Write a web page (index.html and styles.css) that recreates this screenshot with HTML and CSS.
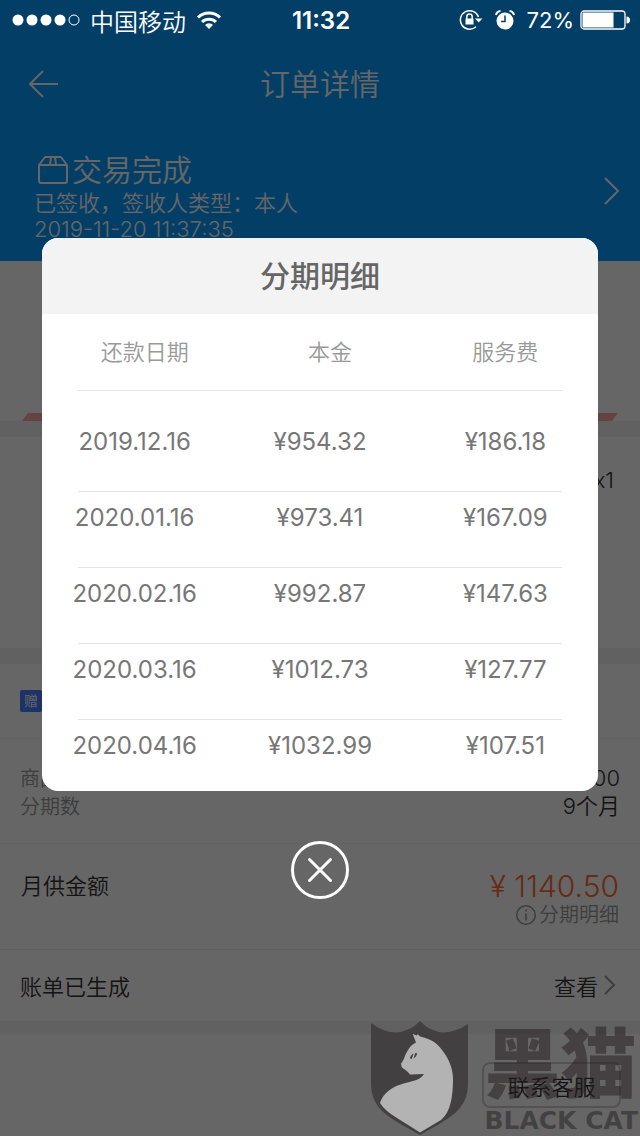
FILE: index.html
```html
<!DOCTYPE html>
<html lang="zh-cn">

<head>
  <meta charset="UTF-8">
  <meta name="viewport" content="width=device-width, initial-scale=1">
  <title>订单详情</title>
  <link rel="stylesheet" href="styles.css">
</head>

<body>
  <!-- 状态栏 -->
  <div class="status-bar">
    <div class="status-left">
      <svg width="68" height="12" viewBox="0 0 68 12" fill="#fff">
        <circle cx="6" cy="6" r="5.5"/>
        <circle cx="20" cy="6" r="5.5"/>
        <circle cx="34" cy="6" r="5.5"/>
        <circle cx="48" cy="6" r="5.5"/>
        <circle cx="62" cy="6" r="5" fill="none" stroke="#fff"/>
      </svg>
      <span class="carrier">中国移动</span>
      <svg width="26" height="20" viewBox="0 0 26 20" fill="none" stroke="#fff" stroke-width="3">
        <path d="M2 7.5a15.5 15.5 0 0 1 22 0"/>
        <path d="M6 12a10 10 0 0 1 14 0"/>
        <path d="M13 19l-4-4a5.5 5.5 0 0 1 8 0z" fill="#fff" stroke="none"/>
      </svg>
    </div>
    <span class="status-time">11:32</span>
    <div class="status-right">
      <svg width="24" height="22" viewBox="0 0 24 22" fill="none" stroke="#fff" stroke-width="1.5">
        <path d="M19.500 8A9.300 9.300 0 1 0 17 17.800"/>
        <path d="M16 9.500h7.500L19.700 13.500z" fill="#fff" stroke="none"/>
        <path d="M7.800 10V7.700a2.700 2.700 0 0 1 5.400 0V10"/>
        <rect x="6.500" y="9.500" width="8" height="6" fill="#fff" stroke="none"/>
      </svg>
      <svg width="20" height="20" viewBox="0 0 20 20">
        <circle cx="10" cy="11" r="8.500" fill="#fff"/>
        <path d="M1 5a5 5 0 0 1 4.500-4M19 5a5 5 0 0 0-4.500-4" fill="none" stroke="#fff" stroke-width="2"/>
        <path d="M10 5.500v6H6" fill="none" stroke="#033e66" stroke-width="1.5"/>
      </svg>
      <span class="battery-text">72%</span>
      <svg width="50" height="20" viewBox="0 0 50 20">
        <rect x="1" y="1" width="44" height="18" rx="3" fill="none" stroke="#fff" stroke-width="1.3"/>
        <rect x="2.500" y="2.500" width="31" height="15" fill="#fff"/>
        <path d="M46.500 6.500a3.500 3.500 0 0 1 0 7z" fill="#fff"/>
      </svg>
    </div>
  </div>

  <!-- 订单页面 -->
  <header class="order-header">
    <div class="nav">
      <button class="back" type="button" aria-label="返回">
        <svg width="32" height="30" viewBox="0 0 32 30" fill="none" stroke="#fff" stroke-width="2">
          <path d="M30 15H2M15 2L2 15l13 13"/>
        </svg>
      </button>
      <h1>订单详情</h1>
    </div>
    <a class="progress" href="#">
      <div class="progress-text">
        <div class="progress-title">
          <svg width="32" height="30" viewBox="0 0 32 30" fill="none" stroke="#fff" stroke-width="2" stroke-linejoin="round">
            <path d="M2 10L8 2h16l6 8v16a2 2 0 0 1-2 2H4a2 2 0 0 1-2-2zM2 10h28M14 2l-1 8M18 2l1 8"/>
          </svg>
          <span>交易完成</span>
        </div>
        <p class="progress-info">已签收，签收人类型：本人</p>
        <p class="progress-time">2019-11-20 11:37:35</p>
      </div>
      <svg width="16" height="28" viewBox="0 0 16 28" fill="none" stroke="#fff" stroke-width="2">
        <path d="M1 1l13 13L1 27"/>
      </svg>
    </a>
  </header>

  <main>
    <section class="address">
      <i class="stripe"></i>
      <i class="stripe"></i>
    </section>
    <section class="product">
      <span>x1</span>
    </section>
    <section class="gift">
      <span class="gift-tag">赠</span>
    </section>
    <section class="summary">
      <div class="row"><span>商品</span><b>.00</b></div>
      <div class="row"><span>分期数</span><b>9个月</b></div>
    </section>
    <section class="monthly">
      <span>月供金额</span>
      <div class="monthly-right">
        <span class="price">¥ 1140.50</span>
        <a class="detail-link" href="#">
          <svg width="22" height="22" viewBox="0 0 22 22" fill="none" stroke="#999" stroke-width="1.5">
            <circle cx="11" cy="11" r="9.3"/>
            <path d="M11 9.500v7M11 5.500v2"/>
          </svg>
          <span>分期明细</span>
        </a>
      </div>
    </section>
    <section class="bill">
      <span>账单已生成</span>
      <a href="#">
        <span>查看</span>
        <svg width="14" height="20" viewBox="0 0 14 20" fill="none" stroke="#999" stroke-width="2">
          <path d="M3 1l9 9-9 9"/>
        </svg>
      </a>
    </section>
  </main>
  <footer>
    <button class="service" type="button">联系客服</button>
  </footer>

  <!-- 分期明细弹窗 -->
  <div class="overlay">
    <div class="dialog" role="dialog" aria-labelledby="dialogTitle">
      <h2 id="dialogTitle">分期明细</h2>
      <table>
        <thead>
          <tr>
            <th>还款日期</th>
            <th>本金</th>
            <th>服务费</th>
          </tr>
        </thead>
        <tbody>
          <tr>
            <td>2019.12.16</td>
            <td>¥954.32</td>
            <td>¥186.18</td>
          </tr>
          <tr>
            <td>2020.01.16</td>
            <td>¥973.41</td>
            <td>¥167.09</td>
          </tr>
          <tr>
            <td>2020.02.16</td>
            <td>¥992.87</td>
            <td>¥147.63</td>
          </tr>
          <tr>
            <td>2020.03.16</td>
            <td>¥1012.73</td>
            <td>¥127.77</td>
          </tr>
          <tr>
            <td>2020.04.16</td>
            <td>¥1032.99</td>
            <td>¥107.51</td>
          </tr>
        </tbody>
      </table>
    </div>
    <button class="close" type="button" aria-label="关闭">
      <svg width="58" height="58" viewBox="0 0 58 58" fill="none" stroke="#fff" stroke-width="3" stroke-linecap="round">
        <circle cx="29" cy="29" r="27.5"/>
        <path d="M18.500 18.500l21 21M39.500 18.500l-21 21"/>
      </svg>
    </button>
  </div>

  <!-- 水印 -->
  <div class="watermark">
    <svg width="97" height="114" viewBox="0 0 97 114">
      <path d="M0 2Q12 11 24 11.500Q39 11 49 0Q59 11 73 11.500Q85 11 97 3V62C97 90 78 97 49 114C20 97 0 90 0 62z" fill="#434041"/>
      <path d="M41.700 13L46 14.500L46.700 13L49 15.500C60 18 66 22 71 29C79 39 82 49 82 58C82 74 80 91 70 99L49 111.500L26 97Q14 90 9 82C12 72 21 66 31 63C40 60 49 60 53 53L39 53.500C36 49 32 48 30.700 46L30 42.500C34 38 33 35 36 31C38 27 40 24 45 21.500z" fill="#b3b3b3"/>
      <path d="M39 37Q40 32 46 32Q46 37 40 38z" fill="#434041"/>
      <path d="M43.500 32l-2 6" stroke="#b3b3b3" stroke-width="1.5"/>
    </svg>
    <div class="watermark-text">
      <span class="watermark-cn">黑猫</span>
      <span class="watermark-en">BLACK CAT</span>
    </div>
  </div>
</body>

</html>
```
FILE: styles.css
```css
* {
  box-sizing: border-box;
}

body {
  position: relative;
  display: flex;
  flex-direction: column;
  min-height: 100vh;
  margin: 0;
  font-family: Inter, "Noto Sans CJK SC", sans-serif;
  font-weight: 350;
  font-size: 22px;
  color: #333;
  background: #fff;
}

h1, h2, p {
  margin: 0;
}

a {
  color: inherit;
  text-decoration: none;
}

button {
  padding: 0;
  border: 0;
  background: none;
  font: inherit;
  color: inherit;
}

svg {
  display: block;
  flex: none;
}

/* 状态栏 */
.status-bar {
  position: absolute;
  z-index: 3;
  top: 0;
  left: 0;
  right: 0;
  display: grid;
  grid-template-columns: 1fr auto 1fr;
  align-items: center;
  height: 40px;
  padding: 0 10px 0 12px;
  font-size: 24px;
  font-weight: 400;
  color: #fff;
}

.status-left, .status-right {
  display: flex;
  align-items: center;
}

.status-left {
  gap: 10px;
}

.carrier {
  font-weight: 350;
}

.status-time {
  font-weight: 600;
}

.status-right {
  justify-content: flex-end;
  gap: 6px;
}

.status-right svg:first-child {
  margin-right: 6px;
}

.battery-text {
  margin-left: 6px;
  font-size: 22px;
}

/* 头部 */
.order-header {
  padding-top: 40px;
  color: #fff;
  background: #079bff;
}

.nav {
  display: grid;
  grid-template-columns: 32px 1fr 32px;
  align-items: center;
  height: 88px;
  padding: 0 28px;
}

.nav h1 {
  padding-bottom: 4px;
  font-size: 30px;
  font-weight: 350;
  text-align: center;
}

.progress {
  display: flex;
  justify-content: space-between;
  align-items: center;
  height: 133px;
  padding: 0 20px 8px 34px;
}

.progress-text {
  padding-top: 10px;
}

.progress-title {
  display: flex;
  align-items: center;
  gap: 3px;
  padding-left: 3px;
  font-size: 30px;
  line-height: 40px;
}

.progress-info {
  line-height: 26px;
}

.progress-time {
  line-height: 26px;
}

/* 内容 */
.address {
  display: flex;
  justify-content: space-between;
  align-items: flex-end;
  height: 176px;
  padding: 0 25px;
  border-bottom: 16px solid #f3f3f3;
}

.stripe {
  width: 64px;
  height: 8px;
  background: #ffa6ad;
  transform: skewX(-38deg);
}

.product {
  height: 227px;
  padding: 30px 26px;
  border-bottom: 16px solid #f3f3f3;
  text-align: right;
}

.gift {
  display: flex;
  align-items: center;
  height: 75px;
  padding: 0 20px;
  border-bottom: 1px solid #f3f3f3;
}

.gift-tag {
  width: 22px;
  border-radius: 2px;
  font-size: 14px;
  line-height: 22px;
  text-align: center;
  color: #fff;
  background: #4a7dff;
}

.summary {
  height: 105px;
  padding: 26px 20px 0;
  border-bottom: 1px solid #f3f3f3;
}

.row {
  display: flex;
  justify-content: space-between;
  align-items: baseline;
  font-size: 20px;
  line-height: 27px;
  color: #999;
}

.row b {
  font-size: 22px;
  font-weight: 350;
  color: #333;
}

.monthly {
  display: flex;
  justify-content: space-between;
  height: 106px;
  padding: 26px 21px 0;
  border-bottom: 1px solid #e8e8e8;
  line-height: 32px;
}

.monthly-right {
  display: flex;
  flex-direction: column;
  align-items: flex-end;
}

.price {
  font-size: 30px;
  color: #ff6c2f;
}

.detail-link {
  display: flex;
  align-items: center;
  gap: 2px;
  font-size: 20px;
  line-height: 26px;
  color: #999;
}

.bill {
  display: flex;
  justify-content: space-between;
  align-items: center;
  height: 84px;
  padding: 0 24px 2px 20px;
  border-bottom: 13px solid #f3f3f3;
}

.bill a {
  display: flex;
  align-items: center;
  gap: 4px;
}

footer {
  flex: 1;
  padding: 28px 19px;
  text-align: right;
}

.service {
  width: 139px;
  height: 46px;
  border: 2px solid #ccc;
  border-radius: 8px;
}

/* 弹窗 */
.overlay {
  position: absolute;
  z-index: 2;
  top: 0;
  right: 0;
  bottom: 0;
  left: 0;
  display: flex;
  flex-direction: column;
  justify-content: center;
  align-items: center;
  gap: 50px;
  padding: 0 42px;
  background: rgba(0, 0, 0, 0.6);
}

.dialog {
  width: 100%;
  border-radius: 16px;
  overflow: hidden;
  background: #fff;
}

.dialog h2 {
  font-size: 30px;
  font-weight: 500;
  line-height: 76px;
  text-align: center;
  color: #666;
  background: #f3f3f3;
}

table {
  width: 100%;
  border-collapse: collapse;
  table-layout: fixed;
}

tr {
  height: 76px;
  background: linear-gradient(#e5e5e5, #e5e5e5) center bottom / calc(100% - 72px) 1px no-repeat;
}

th {
  height: 77px;
  padding: 0 0 4px 20px;
  font-weight: 350;
  color: #999;
}

th:last-child {
  padding-left: 0;
}

td {
  padding: 0 0 24px;
  font-size: 24px;
  font-weight: 400;
  text-align: center;
  color: #777;
}

tbody tr:first-child {
  height: 101px;
}

tbody tr:first-child td {
  padding-bottom: 0;
}

tbody tr:last-child {
  height: 71px;
  background: none;
}

tbody tr:last-child td {
  padding-bottom: 19px;
}

/* 水印 */
.watermark {
  position: absolute;
  z-index: 4;
  right: 2px;
  bottom: 1px;
  display: flex;
  gap: 16px;
  color: rgba(35, 28, 30, 0.5);
  pointer-events: none;
}

.watermark-text {
  display: flex;
  flex-direction: column;
}

.watermark-cn {
  font-size: 76px;
  font-weight: 900;
  line-height: 86px;
}

.watermark-en {
  font-family: "DejaVu Sans", sans-serif;
  font-size: 25px;
  font-weight: 700;
  line-height: 28px;
}
```
